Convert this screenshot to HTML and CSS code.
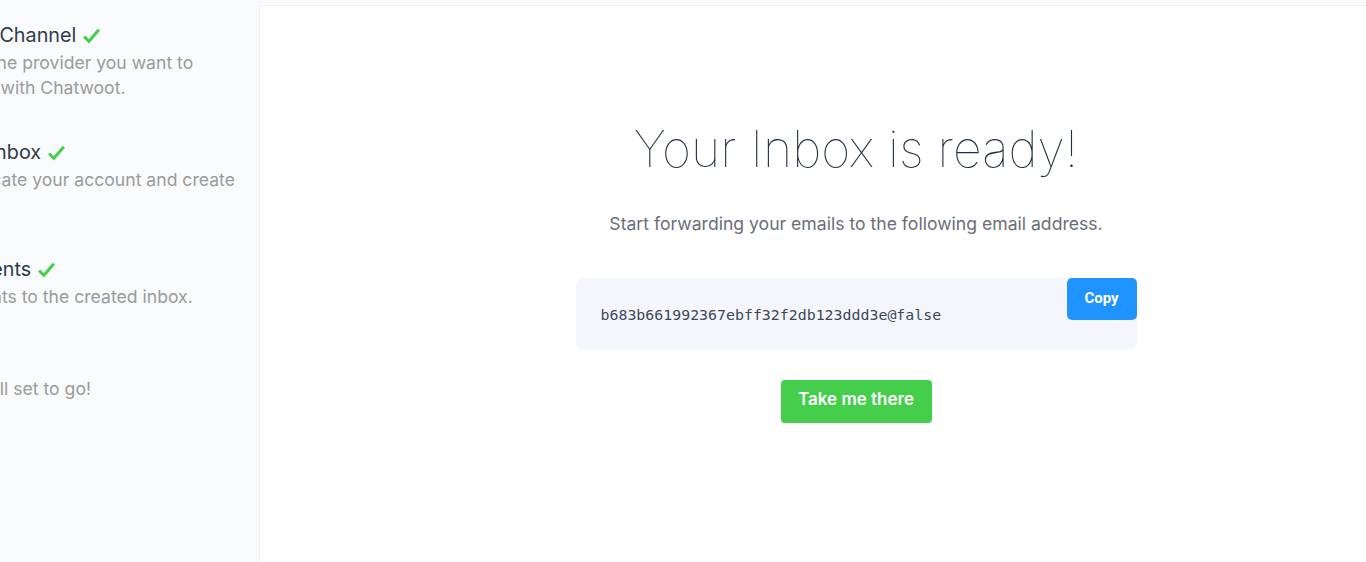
FILE: index.html
```html
<!DOCTYPE html>
<html>
<head>
<meta charset="utf-8">
<link rel="stylesheet" href="styles.css">
</head>
<body>
<div class="app">
  <aside class="wizard">
    <div class="steps">
      <div class="step">
        <h3 class="step-title">Choose Channel <svg class="check" viewBox="0 0 18 16"><path d="M2 9 L6.5 13.5 L16 2.5"/></svg></h3>
        <p class="step-desc">Choose the provider you want to integrate with Chatwoot.</p>
      </div>
      <div class="step">
        <h3 class="step-title">Create Inbox <svg class="check" viewBox="0 0 18 16"><path d="M2 9 L6.5 13.5 L16 2.5"/></svg></h3>
        <p class="step-desc">Authenticate your account and create an inbox.</p>
      </div>
      <div class="step">
        <h3 class="step-title">Add Agents <svg class="check" viewBox="0 0 18 16"><path d="M2 9 L6.5 13.5 L16 2.5"/></svg></h3>
        <p class="step-desc">Add agents to the created inbox.</p>
      </div>
      <div class="step">
        <h3 class="step-title">Voila!</h3>
        <p class="step-desc">You are all set to go!</p>
      </div>
    </div>
  </aside>
  <main class="panel">
    <div class="finish">
      <h1 class="finish-title">Your Inbox is ready!</h1>
      <p class="finish-sub">Start forwarding your emails to the following email address.</p>
      <div class="code-box">
        <code class="code">b683b661992367ebff32f2db123ddd3e@false</code>
        <button class="copy-btn">Copy</button>
      </div>
      <a class="go-btn">Take me there</a>
    </div>
  </main>
</div>
</body>
</html>
```
FILE: styles.css
```css
html, body {
  margin: 0;
  padding: 0;
  height: 100%;
  overflow: hidden;
}
body {
  font-family: "Inter", "Noto Sans", sans-serif;
  background: #f8fafc;
}
.app {
  display: flex;
  height: 562px;
}
.wizard {
  width: 259px;
  flex-shrink: 0;
  overflow: hidden;
  background: #f8fafc;
}
.steps {
  margin-left: -78px;
  width: 340px;
  padding-top: 23px;
}
.step {
  padding-bottom: 40px;
}
.step-title {
  margin: 0;
  font-size: 19.8px;
  line-height: 24px;
  font-weight: 400;
  color: #2f3b4b;
  display: flex;
  align-items: center;
  gap: 6px;
  white-space: nowrap;
}
.check {
  width: 19px;
  height: 17px;
  fill: none;
  stroke: #44ce4b;
  stroke-width: 2.8;
}
.step-desc {
  margin: 3px 0 0;
  font-size: 17.6px;
  line-height: 25px;
  color: #9b9b9b;
  width: 320px;
}
.panel {
  width: 1193px;
  flex-shrink: 0;
  margin-top: 5px;
  background: #fff;
  border-top: 1px solid #eef1f5;
  border-left: 1px solid #eef1f5;
  box-sizing: border-box;
}
.finish {
  display: flex;
  flex-direction: column;
  align-items: center;
  padding-top: 113px;
}
.finish-title {
  margin: 0;
  font-size: 50px;
  font-weight: 100;
  line-height: 60px;
  color: #1f2d3d;
}
.finish-sub {
  margin: 33px 0 0;
  font-size: 17.6px;
  line-height: 24px;
  color: #6b6e78;
}
.code-box {
  position: relative;
  margin-top: 42px;
  width: 561px;
  height: 72px;
  box-sizing: border-box;
  padding: 0 25px;
  display: flex;
  align-items: center;
  background: #f4f6fb;
  border-radius: 8px;
}
.code {
  font-family: "DejaVu Sans Mono", monospace;
  font-size: 14.9px;
  color: #3c4858;
  padding-top: 1px;
}
.copy-btn {
  position: absolute;
  top: 0;
  right: 0;
  width: 70px;
  height: 42px;
  border: 0;
  border-radius: 5px;
  background: #1f93ff;
  color: #fff;
  font-family: "Roboto", "Liberation Sans", sans-serif;
  font-weight: 700;
  font-size: 15px;
  padding: 0 0 2px;
}
.go-btn {
  margin-top: 30px;
  width: 151px;
  height: 43px;
  display: flex;
  align-items: center;
  justify-content: center;
  box-sizing: border-box;
  padding-bottom: 5px;
  background: #44ce4b;
  border-radius: 4px;
  color: #fff;
  font-weight: 600;
  font-size: 17px;
}
```
